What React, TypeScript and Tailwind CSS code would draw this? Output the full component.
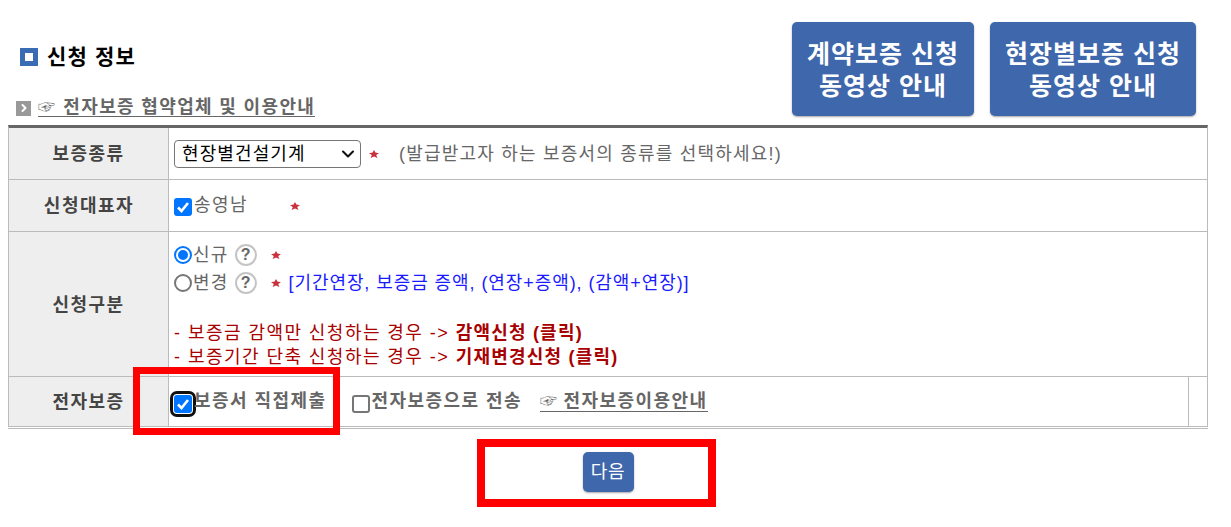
import { ChevronDown } from 'lucide-react';

const FONT = "font-['Liberation_Sans','Noto_Sans_CJK_KR',sans-serif]";

function Star() {
  return (
    <svg width="10" height="8" viewBox="0 0 10 8" className="inline-block shrink-0">
      <path d="M5 0 L6.4 2.6 L10 3.2 L7.2 5 L8.4 8 L5 6.4 L1.6 8 L2.8 5 L0 3.2 L3.6 2.6 Z" fill="#c8323c" />
    </svg>
  );
}

function Help() {
  return (
    <span className="inline-flex h-[22px] w-[22px] shrink-0 items-center justify-center rounded-full border-2 border-[#c4c4c4] text-[16px] font-bold leading-none tracking-normal text-[#666]">
      ?
    </span>
  );
}

function Check({ on, focus }: { on: boolean; focus?: boolean }) {
  return (
    <span
      className={`flex h-[18px] w-[18px] shrink-0 items-center justify-center rounded-[3px] ${
        on ? 'bg-[#0075ff]' : 'border-2 border-[#767676] bg-white'
      } ${focus ? 'outline-[3px] outline-offset-[1px] outline-[#101010]' : ''}`}
    >
      {on && (
        <svg width="16" height="16" viewBox="0 0 16 16">
          <path d="M3 8.5 L6.5 12 L13 4" fill="none" stroke="#fff" strokeWidth="2.6" />
        </svg>
      )}
    </span>
  );
}

function Pointer() {
  return <span className="mr-[2px] text-[17px] font-normal tracking-normal">☞</span>;
}

export default function App() {
  return (
    <div className={`relative h-[527px] w-[1231px] overflow-hidden bg-white ${FONT}`}>
      <div className="flex h-[125px] justify-between pl-4 pr-[35px]">
        <div className="flex flex-col">
          <div className="ml-1 mt-[44px] flex items-center gap-[9px]">
            <span className="flex h-[18px] w-[18px] items-center justify-center bg-[#3a6cb4]">
              <span className="h-2 w-2 bg-white" />
            </span>
            <h2 className="text-[21px] font-bold leading-[26px] tracking-[1.2px] text-black">신청 정보</h2>
          </div>
          <div className="mt-[29px] flex items-center gap-[7px]">
            <span className="flex h-[15px] w-[15px] items-center justify-center bg-[#999]">
              <ChevronDown size={12} strokeWidth={4} color="#fff" className="-rotate-90" />
            </span>
            <a className="border-b border-[#666] text-[18px] font-bold leading-[16px] tracking-[1.35px] text-[#666]">
              <Pointer /> 전자보증 협약업체 및 이용안내
            </a>
          </div>
        </div>
        <div className="flex gap-4 pt-[22px]">
          <button className="h-[94px] w-[182px] rounded-[5px] bg-[#3f67ab] pt-[1px] text-[25px] font-bold leading-[32px] tracking-[1px] text-white shadow-[0_1px_2px_rgba(0,0,0,0.35)]">
            계약보증 신청
            <br />
            동영상 안내
          </button>
          <button className="h-[94px] w-[206px] rounded-[5px] bg-[#3f67ab] pt-[1px] text-[25px] font-bold leading-[32px] tracking-[1px] text-white shadow-[0_1px_2px_rgba(0,0,0,0.35)]">
            현장별보증 신청
            <br />
            동영상 안내
          </button>
        </div>
      </div>

      <div className="mx-2 w-[1200px] border-b border-[#bbb]">
        <div className="border-x border-[#bbb] border-t-[3px] border-t-[#666]">
          <div className="flex h-[52px] border-b border-[#bbb]">
            <div className="flex w-[159px] shrink-0 items-center justify-center bg-[#eee] pt-[2px] text-[18px] font-bold tracking-[1.5px] text-[#444]">
              보증종류
            </div>
            <div className="flex flex-1 items-center border-l border-[#bbb] pl-[5px] text-[18px] tracking-[1.2px] text-[#666]">
              <div className="flex h-[28px] w-[187px] items-center justify-between rounded-[4px] border border-[#767676] pl-[7px] pr-[2px] text-[18px] tracking-[1.1px] text-black">
                <span className="pt-[1px]">현장별건설기계</span>
                <ChevronDown size={20} strokeWidth={2.5} color="#111" />
              </div>
              <span className="ml-2 mr-[20px] flex"><Star /></span>
              <span className="pt-[1px]">(발급받고자 하는 보증서의 종류를 선택하세요!)</span>
            </div>
          </div>

          <div className="flex h-[52px] border-b border-[#bbb]">
            <div className="flex w-[159px] shrink-0 items-center justify-center bg-[#eee] pl-[1px] pt-[2px] text-[18px] font-bold tracking-[1.5px] text-[#444]">
              신청대표자
            </div>
            <div className="flex flex-1 items-center border-l border-[#bbb] pl-[5px] text-[18px] tracking-[1.4px] text-[#666]">
              <span className="mt-[2px]"><Check on /></span>
              <span className="-mt-[1px] ml-[2px]">송영남</span>
              <span className="ml-[42px] flex"><Star /></span>
            </div>
          </div>

          <div className="flex h-[145px] border-b border-[#bbb]">
            <div className="flex w-[159px] shrink-0 items-center justify-center bg-[#eee] pt-[2px] text-[18px] font-bold tracking-[1.5px] text-[#444]">
              신청구분
            </div>
            <div className="flex flex-1 flex-col border-l border-[#bbb] pl-[5px] pt-[9px] text-[18px] leading-[28px] tracking-[1.2px]">
              <div className="flex h-[28px] items-center text-[#666]">
                <span className="flex h-[18px] w-[18px] items-center justify-center rounded-full border-2 border-[#0075ff]">
                  <span className="h-[10px] w-[10px] rounded-full bg-[#0075ff]" />
                </span>
                <span className="ml-[1px]">신규</span>
                <span className="ml-[6px] flex"><Help /></span>
                <span className="ml-[14px] flex"><Star /></span>
              </div>
              <div className="flex h-[28px] items-center text-[#666]">
                <span className="h-[18px] w-[18px] rounded-full border-2 border-[#767676]" />
                <span className="ml-[1px]">변경</span>
                <span className="ml-[6px] flex"><Help /></span>
                <span className="ml-[14px] mr-2 flex"><Star /></span>
                <span className="tracking-[0.92px] text-[#1a1aff]">[기간연장, 보증금 증액, (연장+증액), (감액+연장)]</span>
              </div>
              <div className="mt-[24px] text-[18px] leading-[24px] tracking-[1.45px] text-[#a80000]">
                <div>
                  - 보증금 감액만 신청하는 경우 -&gt; <b className="tracking-[1.2px]">감액신청 (클릭)</b>
                </div>
                <div>
                  - 보증기간 단축 신청하는 경우 -&gt; <b className="tracking-[1.2px]">기재변경신청 (클릭)</b>
                </div>
              </div>
            </div>
          </div>

          <div className="flex h-[49px]">
            <div className="flex w-[159px] shrink-0 items-center justify-center bg-[#eee] pt-[2px] text-[18px] font-bold tracking-[1.5px] text-[#444]">
              전자보증
            </div>
            <div className="flex flex-1 items-center border-l border-[#bbb] pl-[5px] text-[18px] font-bold tracking-[1.45px] text-[#666]">
              <span className="mt-[4px]"><Check on focus /></span>
              <span className="ml-[2px]">보증서 직접제출</span>
              <span className="ml-[25px] mt-[4px]"><Check on={false} /></span>
              <span className="ml-[2px]">전자보증으로 전송</span>
              <a className="ml-[18px] border-b border-[#666] leading-[18px]">
                <span className="text-[17px] font-normal tracking-normal">☞</span> 전자보증이용안내
              </a>
            </div>
            <div className="w-[19px] shrink-0 border-l border-[#bbb]" />
          </div>
        </div>
        <div className="h-[2px] border-t border-[#bbb]" />
      </div>

      <div className="mt-[23px] flex justify-center pr-[15px]">
        <button className="h-10 w-[51px] rounded-[5px] bg-[#3f67ab] text-[18px] tracking-[0.8px] text-white shadow-[0_1px_2px_rgba(0,0,0,0.35)]">
          다음
        </button>
      </div>

      <div className="absolute left-[133px] top-[367px] h-[68px] w-[207px] border-[7px] border-[#ff0000]" />
      <div className="absolute left-[477px] top-[439px] h-[68px] w-[239px] border-[8px] border-[#ff0000]" />
    </div>
  );
}
